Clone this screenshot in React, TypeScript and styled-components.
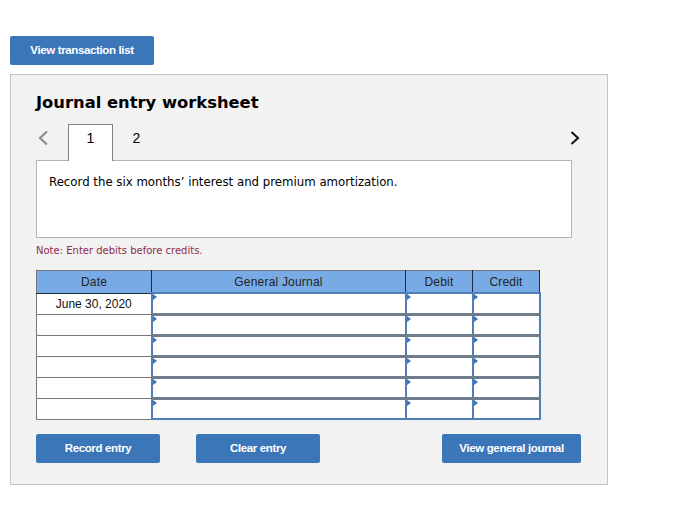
import styled, { createGlobalStyle } from "styled-components";

const GlobalStyle = createGlobalStyle`
  html, body {
    margin: 0;
    background: #fff;
  }
  body {
    font-family: "Liberation Sans", Arial, sans-serif;
  }
`;

const Page = styled.div`
  width: 695px;
  height: 506px;
  box-sizing: border-box;
  padding: 36px 0 0 10px;
`;

const Button = styled.button<{ $width: number }>`
  width: ${(p) => p.$width}px;
  height: 29px;
  padding: 0 0 2px;
  border: 0;
  border-radius: 2px;
  background: #3b76b9;
  color: #fff;
  font-family: "Liberation Sans", Arial, sans-serif;
  font-size: 11.5px;
  font-weight: 700;
  letter-spacing: -0.36px;
`;

const Panel = styled.section`
  width: 598px;
  height: 411px;
  box-sizing: border-box;
  margin-top: 9px;
  padding: 17px 26px 0 25px;
  border: 1px solid #c4c4c4;
  background: #f2f2f2;
`;

const Heading = styled.h2`
  margin: 0;
  height: 32px;
  color: #000;
  font-family: "DejaVu Sans", Verdana, sans-serif;
  font-size: 16.35px;
  font-weight: 700;
  line-height: 21px;
`;

const TabBar = styled.div`
  display: flex;
  align-items: flex-start;
  height: 37px;
  position: relative;
  z-index: 1;
`;

const Arrow = styled.svg`
  display: block;
  margin-top: 6px;
`;

const PrevArrow = styled(Arrow)`
  margin-left: 1px;
  margin-right: 18px;
`;

const NextArrow = styled(Arrow)`
  margin-left: auto;
  margin-right: 0;
`;

const Tab = styled.div<{ $active?: boolean }>`
  width: 45px;
  height: 37px;
  box-sizing: border-box;
  padding-top: 4px;
  border: 1px solid ${(p) => (p.$active ? "#808080" : "transparent")};
  border-bottom: 0;
  background: ${(p) => (p.$active ? "#fff" : "transparent")};
  color: #000;
  font-size: 14px;
  line-height: 18px;
  text-align: center;

  & + & {
    margin-left: 1px;
  }
`;

const Prompt = styled.div`
  width: 536px;
  height: 78px;
  box-sizing: border-box;
  margin-top: -1px;
  padding: 13px 12px;
  border: 1px solid #b4b4b4;
  background: #fff;
  color: #000;
  font-family: "DejaVu Sans", Verdana, sans-serif;
  font-size: 11.75px;
  line-height: 17px;
`;

const Note = styled.p`
  margin: 6px 0 0;
  height: 26px;
  color: #8f2a4a;
  font-family: "DejaVu Sans", Verdana, sans-serif;
  font-size: 10px;
  line-height: 13px;
`;

const Table = styled.table`
  width: 503px;
  table-layout: fixed;
  border-collapse: collapse;
  border: 1px solid #777;
`;

const HeadCell = styled.th<{ $width: number }>`
  width: ${(p) => p.$width}px;
  height: 21px;
  padding: 0;
  border: 1px solid #1f2d3d;
  border-top-color: #777;
  border-left-color: #777;
  background: #78abe5;
  color: #222;
  font-size: 12px;
  font-weight: 400;
  letter-spacing: 0.2px;
`;

const DateCell = styled.td`
  height: 20px;
  padding: 0;
  border: 1px solid #777;
  background: #fff;
  color: #111;
  font-size: 12px;
  text-align: center;
`;

const EntryCell = styled.td`
  position: relative;
  height: 20px;
  padding: 0;
  box-sizing: border-box;
  border: 2px solid #4f7fb8;
  border-bottom: 3px solid #6f7c8c;
  background: #fff;

  tr:last-child & {
    border-bottom: 2px solid #4f7fb8;
  }

  &::before {
    content: "";
    position: absolute;
    top: 0;
    left: 0;
    border-style: solid;
    border-width: 3.5px 0 3.5px 4px;
    border-color: transparent transparent transparent #3b76b9;
  }
`;

const Actions = styled.div`
  display: flex;
  justify-content: space-between;
  width: 545px;
  margin-top: 14px;
`;

const LeftActions = styled.div`
  display: flex;
  gap: 36px;
`;

const rows = ["June 30, 2020", "", "", "", "", ""];

export default function App() {
  return (
    <Page>
      <GlobalStyle />
      <Button $width={144}>View transaction list</Button>
      <Panel>
        <Heading>Journal entry worksheet</Heading>
        <TabBar>
          <PrevArrow width="13" height="16" viewBox="0 0 13 16">
            <path d="M10 1.5 3 8l7 6.5" fill="none" stroke="#8c8c8c" strokeWidth="2.2" />
          </PrevArrow>
          <Tab $active>1</Tab>
          <Tab>2</Tab>
          <NextArrow width="11" height="16" viewBox="0 0 11 16">
            <path d="M1.5 2 8 8l-6.5 6" fill="none" stroke="#111" strokeWidth="2" />
          </NextArrow>
        </TabBar>
        <Prompt>Record the six months’ interest and premium amortization.</Prompt>
        <Note>Note: Enter debits before credits.</Note>
        <Table>
          <thead>
            <tr>
              <HeadCell $width={114}>Date</HeadCell>
              <HeadCell $width={253}>General Journal</HeadCell>
              <HeadCell $width={66}>Debit</HeadCell>
              <HeadCell $width={66}>Credit</HeadCell>
            </tr>
          </thead>
          <tbody>
            {rows.map((date, i) => (
              <tr key={i}>
                <DateCell>{date}</DateCell>
                <EntryCell />
                <EntryCell />
                <EntryCell />
              </tr>
            ))}
          </tbody>
        </Table>
        <Actions>
          <LeftActions>
            <Button $width={124}>Record entry</Button>
            <Button $width={124}>Clear entry</Button>
          </LeftActions>
          <Button $width={139}>View general journal</Button>
        </Actions>
      </Panel>
    </Page>
  );
}
